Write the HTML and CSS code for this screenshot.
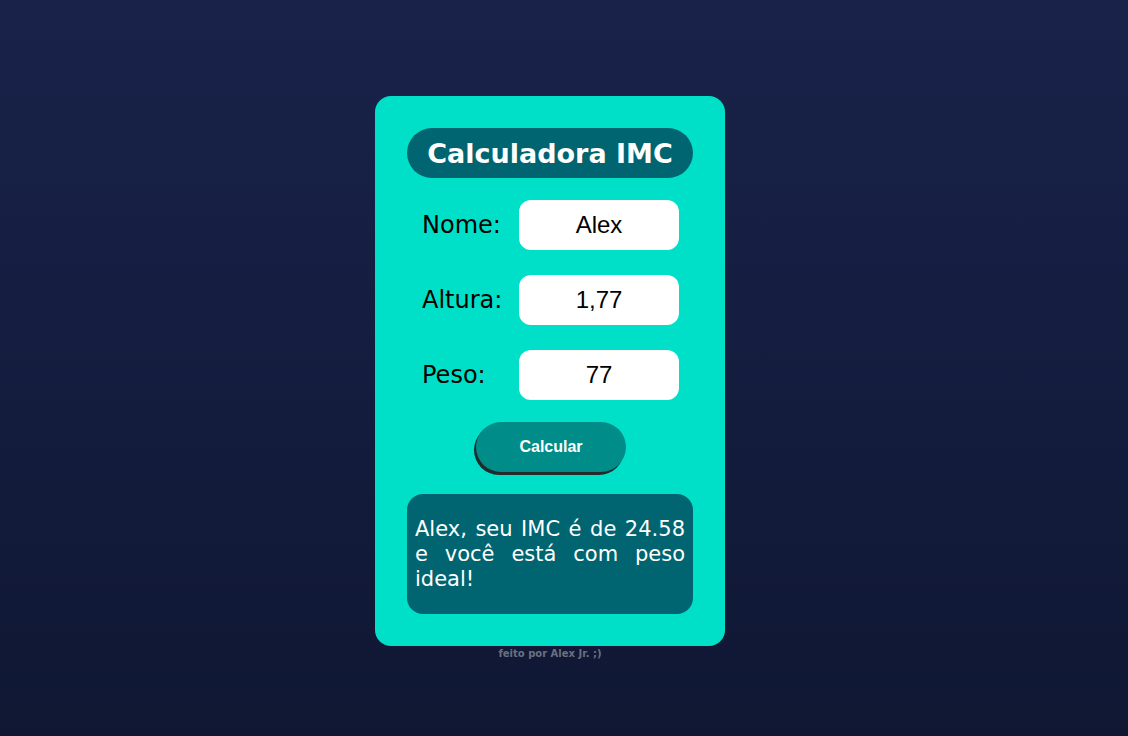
FILE: index.html
```html
<!DOCTYPE html>
<html lang="pt-BR">
<head>
<meta charset="utf-8">
<title>Calculadora IMC</title>
<link rel="stylesheet" href="styles.css">
</head>
<body>
<main class="page">
  <section class="card">
    <h1 class="title">Calculadora IMC</h1>
    <div class="form">
      <div class="row">
        <label class="label" for="nome">Nome:</label>
        <input class="field" id="nome" type="text" value="Alex">
      </div>
      <div class="row">
        <label class="label" for="altura">Altura:</label>
        <input class="field" id="altura" type="text" value="1,77">
      </div>
      <div class="row">
        <label class="label" for="peso">Peso:</label>
        <input class="field" id="peso" type="text" value="77">
      </div>
    </div>
    <button class="btn" type="button">Calcular</button>
    <div class="result"><p>Alex, seu IMC é de 24.58 e você está com peso ideal!</p></div>
  </section>
  <footer class="credit">feito por Alex Jr. ;)</footer>
</main>
</body>
</html>
```
FILE: styles.css
```css
* { box-sizing: border-box; }
html, body { height: 100%; }
body {
  margin: 0;
  background: linear-gradient(to bottom, #19234a, #0f1733);
  font-family: "DejaVu Sans", Verdana, sans-serif;
}
.page {
  display: flex;
  flex-direction: column;
  align-items: center;
  padding-top: 96px;
  padding-right: 28px;
}
.card {
  width: 350px;
  background: #00e0c9;
  border-radius: 16px;
  padding: 32px;
  display: flex;
  flex-direction: column;
  align-items: center;
}
.title {
  margin: 0;
  width: 286px;
  height: 50px;
  border-radius: 25px;
  background: #006570;
  color: #fff;
  font-family: "DejaVu Sans", Verdana, sans-serif;
  font-weight: bold;
  font-size: 27px;
  display: flex;
  align-items: center;
  justify-content: center;
}
.form {
  margin-top: 22px;
  display: flex;
  flex-direction: column;
  gap: 25px;
  width: 100%;
}
.row {
  display: flex;
  align-items: center;
  padding-left: 15px;
}
.label {
  width: 97px;
  font-size: 24px;
  color: #000;
}
.field {
  width: 160px;
  height: 50px;
  border: none;
  border-radius: 12px;
  background: #fff;
  text-align: center;
  font-family: "Liberation Sans", Arial, sans-serif;
  font-size: 24px;
  color: #000;
  outline: none;
  padding: 0;
}
.btn {
  margin-top: 22px;
  width: 150px;
  height: 50px;
  border: none;
  border-radius: 25px;
  background: #008d8a;
  color: #fff;
  font-family: "Liberation Sans", Arial, sans-serif;
  font-weight: bold;
  font-size: 16px;
  box-shadow: -2px 3px 0 #222a2c;
  margin-left: 2px;
}
.result {
  margin-top: 22px;
  width: 286px;
  height: 120px;
  border-radius: 16px;
  background: #006570;
  color: #fff;
  display: flex;
  align-items: center;
  padding: 0 8px;
}
.result p {
  margin: 0;
  font-size: 21px;
  line-height: 25px;
  text-align: justify;
}
.credit {
  margin-top: 2px;
  color: #6b7081;
  font-family: "DejaVu Sans", Verdana, sans-serif;
  font-weight: bold;
  font-size: 10px;
}
```
